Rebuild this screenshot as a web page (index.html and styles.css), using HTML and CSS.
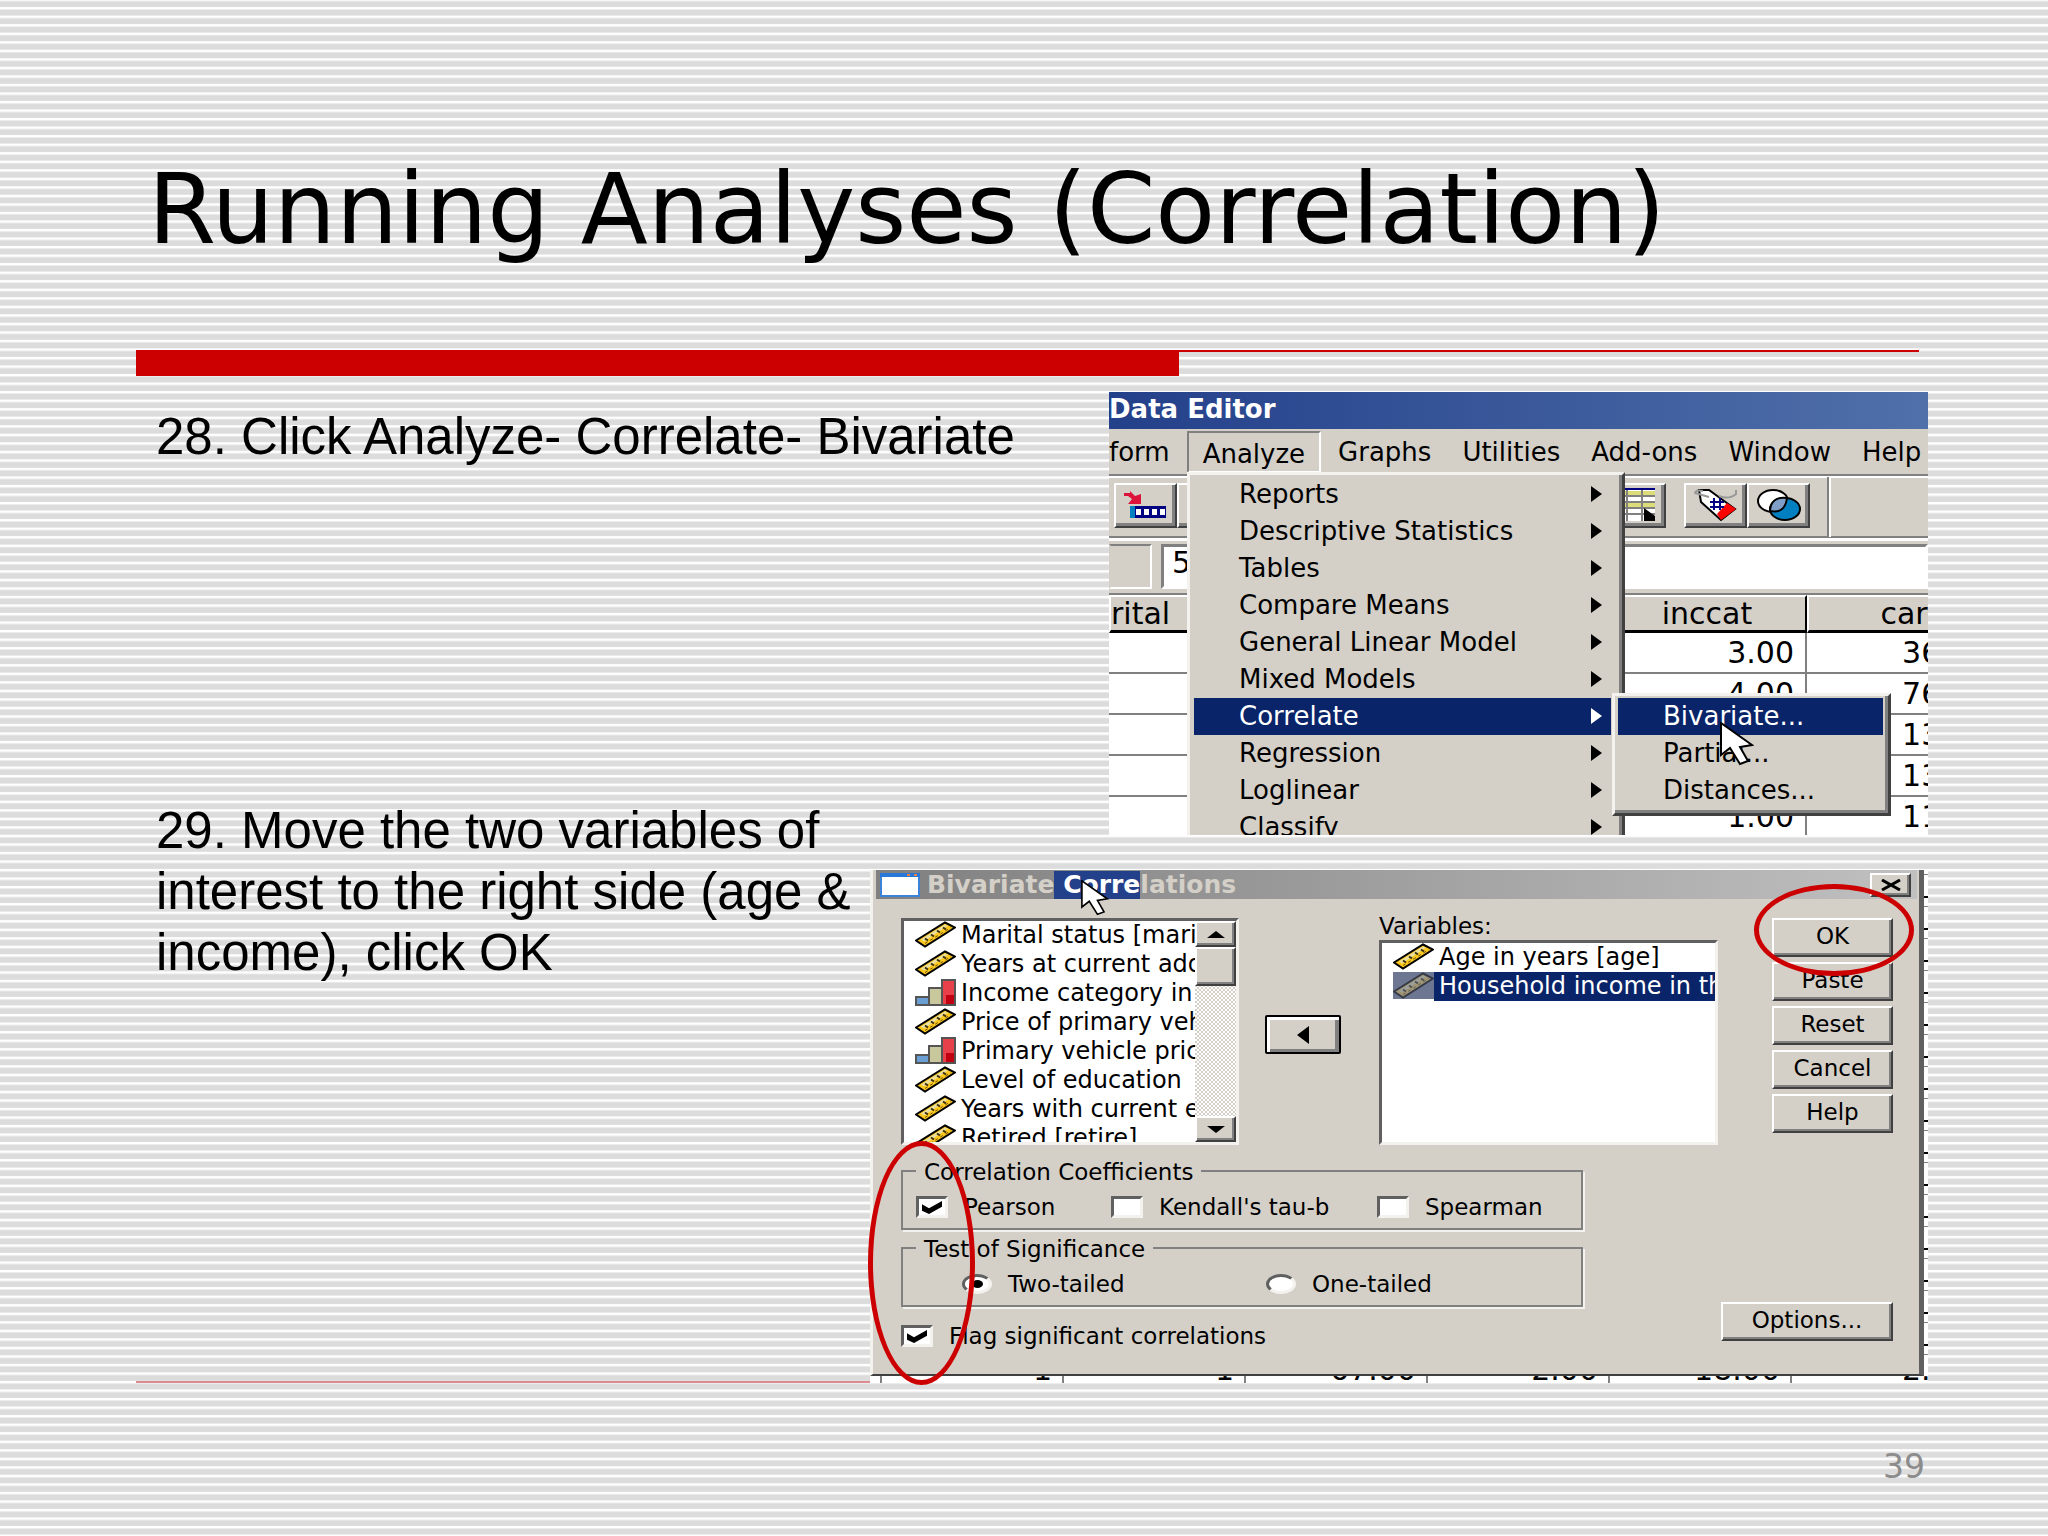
FILE: index.html
```html
<!DOCTYPE html>
<html lang="en">
<head>
    <meta charset="UTF-8">
    <meta name="viewport" content="width=device-width, initial-scale=1.0">
    <title>Running Analyses (Correlation)</title>
    <link rel="stylesheet" href="styles.css">
</head>
<body>
    <!-- shared icons -->
    <svg width="0" height="0" class="defs" aria-hidden="true">
        <symbol id="ruler" viewBox="0 0 41 26">
            <path d="M1 19 L30 1 L40 6 L10 25 Z" fill="#fcc81e" stroke="#000" stroke-width="2"/>
            <path d="M6 18 L30 3 L33 4 L9 20 Z" fill="#e8dfa0"/>
            <path d="M10 17 l3 2 M16 13 l3 2 M22 9 l3 2 M28 6 l3 2" stroke="#3a3010" stroke-width="2" fill="none"/>
            <path d="M10 22 L36 6" stroke="#6a5410" stroke-width="1" stroke-dasharray="3 3" fill="none"/>
        </symbol>
        <symbol id="bars" viewBox="0 0 41 27">
            <rect x="1" y="18" width="13" height="8" fill="#6a9fd4" stroke="#555" stroke-width="2"/>
            <rect x="14" y="9" width="13" height="17" fill="#c9c79c" stroke="#555" stroke-width="2"/>
            <rect x="27" y="1" width="13" height="25" fill="#e8404a" stroke="#555" stroke-width="2"/>
            <path d="M31 25 V16 H39 V25 Z" fill="#c00010"/>
        </symbol>
        <symbol id="cursor" viewBox="0 0 34 44">
            <path d="M1 1 V33 L10 26 L20 42 L28 39 L20 25 L32 23 Z" fill="#fff" stroke="#000" stroke-width="2"/>
        </symbol>
    </svg>

    <main class="slide">
        <h1>Running Analyses (Correlation)</h1>
        <div class="rule"></div>

        <div class="content">
            <p class="step step-one">28. Click Analyze- Correlate- Bivariate</p>

            <div class="editor">
                <div class="editor-title">Data Editor</div>
                <nav class="menubar">
                    <button>form</button>
                    <button class="open">Analyze</button>
                    <button>Graphs</button>
                    <button>Utilities</button>
                    <button>Add-ons</button>
                    <button>Window</button>
                    <button>Help</button>
                </nav>
                <div class="toolbar">
                    <button class="tool" aria-label="Insert variable">
                        <svg width="44" height="28" viewBox="0 0 44 28">
                            <path d="M0 2 H6 V0 L11 5 L17 3 V13 H4 L8 8 L4 5 H0 Z" fill="#dc143c"/>
                            <rect x="6" y="15" width="36" height="12" fill="#000080"/>
                            <path d="M12 18h5v6h-5z M20 18h5v6h-5z M28 18h5v6h-5z M36 18h5v6h-5z" fill="#fff"/>
                            <rect x="6" y="15" width="5" height="12" fill="#0080c0"/>
                        </svg>
                    </button>
                    <button class="tool" aria-label="Find"></button>
                    <button class="tool tool-far" aria-label="Select cases">
                        <svg width="44" height="34" viewBox="0 0 44 34">
                            <rect width="42" height="33" fill="#fff"/>
                            <path d="M0 3h42v5H0z M0 15h42v5H0z" fill="#dcdc78"/>
                            <path d="M0 8h42 M0 14h42 M0 20h42 M0 26h42 M14 2v31 M29 2v31" stroke="#808080" stroke-width="2"/>
                            <path d="M0 1h42" stroke="#000080" stroke-width="2"/>
                            <path d="M31 20 L42 28 V33 H31 Z" fill="#000"/>
                        </svg>
                    </button>
                    <button class="tool tool-gap" aria-label="Value labels">
                        <svg width="46" height="34" viewBox="0 0 46 34">
                            <path d="M6 2 L16 2 L42 21 L28 32 L8 14 Z" fill="#fff" stroke="#000" stroke-width="2"/>
                            <path d="M34 15 L43 21 L28 32 L24 26 Z" fill="#f00"/>
                            <path d="M2 6 Q2 1 10 3 M2 5 L16 9 M26 8 Q36 12 43 6 V2" fill="none" stroke="#999" stroke-width="2"/>
                            <path d="M21 10v12 M27 10v12 M17 14h14 M17 19h14" stroke="#000080" stroke-width="2"/>
                        </svg>
                    </button>
                    <button class="tool" aria-label="Use sets">
                        <svg width="46" height="34" viewBox="0 0 46 34">
                            <ellipse cx="17" cy="13" rx="15" ry="11" fill="#fff" stroke="#000" stroke-width="2"/>
                            <ellipse cx="29" cy="21" rx="15" ry="11" fill="#0080c0" stroke="#000" stroke-width="2"/>
                            <path d="M31 10 Q15 8 14 23 Q29 26 31 10 Z" fill="#809fc8" stroke="#000" stroke-width="2"/>
                        </svg>
                    </button>
                    <span class="separator"></span>
                </div>
                <div class="formula">
                    <span class="cell-name"></span>
                    <input class="cell-value" type="text" value="55" aria-label="Cell value">
                </div>
                <table class="data">
                    <thead>
                        <tr><th class="col-marital">rital</th><th class="col-inccat">inccat</th><th class="col-car">car</th></tr>
                    </thead>
                    <tbody>
                        <tr><td></td><td>3.00</td><td>36.00</td></tr>
                        <tr><td></td><td>4.00</td><td>76.00</td></tr>
                        <tr><td></td><td>2.00</td><td>13.00</td></tr>
                        <tr><td></td><td>2.00</td><td>13.00</td></tr>
                        <tr><td></td><td>1.00</td><td>11.00</td></tr>
                    </tbody>
                </table>

                <ul class="menu analyze-menu">
                    <li><button>Reports</button></li>
                    <li><button>Descriptive Statistics</button></li>
                    <li><button>Tables</button></li>
                    <li><button>Compare Means</button></li>
                    <li><button>General Linear Model</button></li>
                    <li><button>Mixed Models</button></li>
                    <li>
                        <button class="selected">Correlate</button>
                        <ul class="menu submenu">
                            <li><button class="selected">Bivariate...</button></li>
                            <li><button>Partial...</button></li>
                            <li><button>Distances...</button></li>
                        </ul>
                        <svg class="pointer menu-pointer"><use href="#cursor"/></svg>
                    </li>
                    <li><button>Regression</button></li>
                    <li><button>Loglinear</button></li>
                    <li><button>Classify</button></li>
                </ul>
            </div>

            <p class="step step-two">29. Move the two variables of interest to the right side (age &amp; income), click OK</p>

            <div class="capture">
                <div class="backdrop">
                    <form class="dialog">
                        <div class="dialog-title">
                            <svg width="40" height="24" viewBox="0 0 40 24">
                                <rect x="1" y="1" width="38" height="22" fill="#fff" stroke="#3c82d8" stroke-width="2"/>
                                <rect width="40" height="4" fill="#2878d8"/>
                                <path d="M27 2h3 M34 2h3" stroke="#f08040" stroke-width="2"/>
                            </svg>
                            <span>Bivariate<mark> Corre</mark>lations</span>
                            <button type="button" class="close" aria-label="Close">
                                <svg width="22" height="12" viewBox="0 0 22 12"><path d="M2 1 L20 11 M20 1 L2 11" stroke="#000" stroke-width="3"/></svg>
                            </button>
                        </div>
                        <div class="dialog-body">
                            <div class="list source-list">
                                <ul>
                                    <li><svg><use href="#ruler"/></svg><span>Marital status [marital]</span></li>
                                    <li><svg><use href="#ruler"/></svg><span>Years at current address</span></li>
                                    <li><svg><use href="#bars"/></svg><span>Income category in</span></li>
                                    <li><svg><use href="#ruler"/></svg><span>Price of primary vehicle</span></li>
                                    <li><svg><use href="#bars"/></svg><span>Primary vehicle price</span></li>
                                    <li><svg><use href="#ruler"/></svg><span>Level of education</span></li>
                                    <li><svg><use href="#ruler"/></svg><span>Years with current employer</span></li>
                                    <li><svg><use href="#ruler"/></svg><span>Retired [retire]</span></li>
                                </ul>
                                <div class="scrollbar">
                                    <button type="button" aria-label="Scroll up"><i class="up"></i></button>
                                    <span class="thumb"></span>
                                    <button type="button" class="last" aria-label="Scroll down"><i class="down"></i></button>
                                </div>
                            </div>
                            <button type="button" class="move" aria-label="Move variable"><i class="left"></i></button>
                            <div class="variables">
                                <h2>Variables:</h2>
                                <div class="list">
                                    <ul>
                                        <li><svg><use href="#ruler"/></svg><span>Age in years [age]</span></li>
                                        <li class="picked"><svg><use href="#ruler"/></svg><span>Household income in thousands</span></li>
                                    </ul>
                                </div>
                            </div>
                            <div class="actions">
                                <button type="button">OK</button>
                                <button type="button">Paste</button>
                                <button type="button">Reset</button>
                                <button type="button">Cancel</button>
                                <button type="button">Help</button>
                            </div>
                        </div>
                        <div class="dialog-options">
                            <div class="groups">
                                <fieldset>
                                    <legend>Correlation Coefficients</legend>
                                    <label class="pearson"><input type="checkbox" checked>Pearson</label>
                                    <label class="kendall"><input type="checkbox">Kendall's tau-b</label>
                                    <label><input type="checkbox">Spearman</label>
                                </fieldset>
                                <fieldset>
                                    <legend>Test of Significance</legend>
                                    <label class="two-tailed"><input type="radio" name="tail" checked>Two-tailed</label>
                                    <label><input type="radio" name="tail">One-tailed</label>
                                </fieldset>
                                <label class="flag"><input type="checkbox" checked>Flag significant correlations</label>
                            </div>
                            <button type="button" class="options">Options...</button>
                        </div>
                    </form>
                    <div class="strip"><span></span><span>1</span><span>1</span><span>67.00</span><span>2.00</span><span>18.00</span><span class="cut">2.00</span></div>
                </div>
                <svg class="pointer title-pointer"><use href="#cursor"/></svg>
                <div class="ring ring-tests"></div>
                <div class="ring ring-ok"></div>
            </div>
        </div>

        <footer>39</footer>
    </main>
</body>
</html>
```
FILE: styles.css
```css
* {
    box-sizing: border-box;
}

body {
    margin: 0;
    min-height: 100vh;
    font-family: "DejaVu Sans", Verdana, sans-serif;
    color: #000;
    /* 15 ruled lines in every 128px */
    background-color: #dcdcdc;
    background-image: repeating-linear-gradient(#fff 0, #dcdcdc 2px, #dcdcdc calc(100% / 15 - 2px), #fff calc(100% / 15 - 1px), #fff calc(100% / 15));
    background-size: 100% 128px;
}

button, input {
    font: inherit;
    color: inherit;
    margin: 0;
}

ul {
    list-style: none;
    margin: 0;
    padding: 0;
}

.defs {
    position: absolute;
}

.slide {
    padding: 151px 120px 0 136px;
}

h1 {
    margin: 0 0 83px 12px;
    font-size: 98px;
    font-weight: normal;
    line-height: 116px;
    white-space: nowrap;
}

.rule {
    height: 26px;
    margin: 0 9px 16px 0;
    border-top: 2px solid #cc0000;
    background: linear-gradient(#cc0000, #cc0000) no-repeat 0 0 / 1043px 100%;
    background-size: calc(100% * 7 / 12 + 3px) 100%;
}

.content {
    display: grid;
    grid-template-columns: 734fr 239fr 819fr;
    grid-template-rows: 1fr 35px 35px auto;
}

.step {
    margin: 0;
    padding-left: 20px;
    font-family: "Liberation Sans", Arial, sans-serif;
    font-size: 51px;
    line-height: 61px;
}

.step-one {
    grid-area: 1 / 1 / 2 / 3;
    padding-top: 14px;
}

.step-two {
    grid-area: 2 / 1 / 5 / 2;
    border-bottom: 2px solid #dc8c90;
}

/* data editor */
.editor {
    grid-area: 1 / 3 / 3 / 4;
    position: relative;
    overflow: hidden;
    aspect-ratio: 819 / 443;
    background: #d4d0c8;
    font-size: 26px;
}

.editor-title {
    height: 37px;
    line-height: 34px;
    font-weight: bold;
    color: #fff;
    white-space: nowrap;
    background: linear-gradient(to right, #23408a, #5070aa);
}

.menubar {
    display: flex;
    align-items: center;
    gap: 31px;
    height: 47px;
    border-bottom: 2px solid #808080;
    white-space: nowrap;
}

.menubar button {
    flex: none;
    padding: 0;
    border: none;
    background: none;
    line-height: 34px;
}

.menubar .open {
    margin: 0 -14px;
    padding: 4px 14px 0;
    border: 2px solid;
    border-color: #808080 #fff #fff #808080;
}

.toolbar {
    display: flex;
    align-items: center;
    height: 62px;
    padding: 0 0 4px 5px;
    border-top: 2px solid #fff;
    border-bottom: 2px solid #808080;
}

.tool {
    display: flex;
    align-items: center;
    justify-content: center;
    flex: none;
    width: 63px;
    height: 45px;
    padding: 0;
    border: 2px solid;
    border-color: #fff #404040 #404040 #fff;
    background: #d4d0c8;
    box-shadow: inset -3px -3px #808080;
}

.tool-far {
    margin-left: 363px;
}

.tool-gap {
    margin-left: 18px;
}

.separator {
    width: 4px;
    height: 60px;
    margin: 0 0 -4px 17px;
    border-left: 2px solid #808080;
    border-right: 2px solid #fff;
}

.formula {
    display: flex;
    gap: 9px;
    height: 57px;
    padding: 3px 0 4px;
    border-top: 3px solid #fff;
    border-bottom: 2px solid #808080;
}

.cell-name {
    width: 43px;
    border: 2px solid;
    border-color: #808080 #fff #fff transparent;
}

.cell-value {
    flex: 1;
    min-width: 0;
    padding: 0 8px 8px;
    border: 3px solid;
    border-color: #808080 #fff #fff #808080;
    background: #fff;
    font-size: 30px;
}

.data {
    table-layout: fixed;
    width: 892px;
    border-collapse: separate;
    border-spacing: 0;
    background: #fff;
    font-size: 30px;
}

.data th {
    height: 38px;
    padding: 0;
    line-height: 32px;
    font-weight: normal;
    background: #d4d0c8;
    border-top: 2px solid #fff;
    border-left: 2px solid #fff;
    border-right: 2px solid #000;
    border-bottom: 3px solid #000;
}

.data .col-marital {
    width: 498px;
    text-align: left;
}

.data .col-inccat {
    width: 200px;
}

.data td {
    height: 41px;
    padding: 0 11px 0 0;
    line-height: 36px;
    text-align: right;
    border-right: 2px solid #808080;
    border-bottom: 2px solid #808080;
}

.menu {
    position: absolute;
    padding: 2px 11px 2px 3px;
    border: 3px solid;
    border-color: #f4f2ee #404040 #404040 #f4f2ee;
    background: #d4d0c8;
    box-shadow: inset -3px -3px #808080;
}

.menu li {
    position: relative;
}

.menu button {
    display: block;
    width: 100%;
    height: 37px;
    padding: 0 0 0 45px;
    border: none;
    background: none;
    text-align: left;
    line-height: 35px;
    white-space: nowrap;
}

.menu .selected {
    color: #fff;
    background: #0a246a;
}

.analyze-menu {
    top: 80px;
    left: 78px;
    width: 438px;
    padding-left: 4px;
    padding-top: 1px;
}

.analyze-menu > li::after {
    content: "";
    position: absolute;
    top: 10px;
    right: 9px;
    border-left: 11px solid #000;
    border-top: 8px solid transparent;
    border-bottom: 8px solid transparent;
}

.analyze-menu > li:nth-child(7)::after {
    border-left-color: #fff;
}

.submenu {
    z-index: 1;
    top: -5px;
    left: 418px;
    width: 279px;
    padding-right: 5px;
    padding-bottom: 4px;
}

.pointer {
    position: absolute;
    z-index: 2;
    width: 34px;
    height: 44px;
}

.menu-pointer {
    top: 24px;
    left: 526px;
}

/* bivariate correlations dialog */
.capture {
    grid-area: 4 / 2 / 5 / 4;
    position: relative;
    font-size: 23px;
}

.backdrop {
    overflow: hidden;
    padding: 0 4px 0 0;
    background: repeating-linear-gradient(#fff 0, #fff 4px, #808080 4px, #808080 5px, #fff 5px, #fff 26px, #000 26px, #000 28px, #fff 28px, #fff 32px);
}

.dialog {
    height: 506px;
    padding: 0 2px 0 3px;
    border-left: 3px solid #f4f2ee;
    border-right: 5px solid #606060;
    border-bottom: 2px solid #404040;
    background: #d4d0c8;
}

.dialog-title {
    display: flex;
    align-items: center;
    gap: 7px;
    height: 29px;
    padding: 0 6px 0 4px;
    font-size: 25px;
    font-weight: bold;
    line-height: 28px;
    color: #d4d0c8;
    white-space: pre;
    background: linear-gradient(to right, #808080, #c0c0c0);
}

.dialog-title mark {
    display: inline-block;
    color: #fff;
    background: #23408a;
}

.dialog button {
    padding: 0;
    border: 2px solid;
    border-color: #fff #404040 #404040 #fff;
    background: #d4d0c8;
    box-shadow: inset -2px -2px #808080;
}

.dialog .close {
    display: flex;
    align-items: center;
    justify-content: center;
    width: 41px;
    height: 24px;
    margin-left: auto;
}

.dialog-body {
    display: grid;
    grid-template-columns: 338fr 140px 339fr 175px;
    height: 227px;
    margin: 19px 24px 0 25px;
}

.list {
    display: flex;
    min-width: 0;
    overflow: hidden;
    border: 3px solid;
    border-color: #606060 #f4f2ee #f4f2ee #606060;
    background: #fff;
    font-size: 24px;
}

.list ul {
    flex: 1;
    min-width: 0;
    height: 0;
    padding-left: 11px;
}

.list li {
    display: flex;
    height: 29px;
    overflow: hidden;
    line-height: 29px;
    white-space: nowrap;
}

.list li svg {
    flex: none;
    width: 41px;
    height: 27px;
}

.list li span {
    flex: 1;
    padding-left: 5px;
}

.picked svg {
    background: linear-gradient(#7484b4, #7484b4);
    filter: brightness(0.9) saturate(0.6);
}

.picked use {
    opacity: 0.5;
}

.picked span {
    color: #fff;
    background: #0a246a;
}

.scrollbar {
    display: flex;
    flex-direction: column;
    width: 41px;
    background: repeating-conic-gradient(#fff 0 25%, #d4d0c8 0 50%) 0 0 / 4px 4px;
}

.scrollbar button {
    display: flex;
    align-items: center;
    justify-content: center;
    height: 26px;
}

.thumb {
    height: 39px;
    border: 2px solid;
    border-color: #fff #404040 #404040 #fff;
    background: #d4d0c8;
    box-shadow: inset -2px -2px #808080;
}

.scrollbar .last {
    margin-top: auto;
}

.up, .down {
    border-left: 9px solid transparent;
    border-right: 9px solid transparent;
}

.up {
    border-bottom: 7px solid #000;
}

.down {
    border-top: 7px solid #000;
}

.left {
    border-right: 12px solid #000;
    border-top: 9px solid transparent;
    border-bottom: 9px solid transparent;
}

.dialog .move {
    display: flex;
    align-items: center;
    justify-content: center;
    width: 76px;
    height: 39px;
    margin: 97px 0 0 26px;
    border-color: #000;
    border-radius: 2px;
    box-shadow: inset 3px 3px #fff, inset -4px -3px #808080;
}

.variables {
    display: flex;
    flex-direction: column;
    min-width: 0;
}

.variables h2 {
    margin: -6px 0 0;
    font-size: 23px;
    font-weight: normal;
    line-height: 28px;
}

.variables .list {
    flex: 1;
}

.actions {
    display: flex;
    flex-direction: column;
    gap: 5px;
    margin-left: 54px;
}

.actions button {
    height: 39px;
    padding-bottom: 3px;
}

.dialog-options {
    display: flex;
    align-items: flex-end;
    justify-content: space-between;
    margin: 11px 24px 0 25px;
}

.groups {
    flex: 0 0 682px;
}

fieldset {
    display: flex;
    align-items: center;
    height: 74px;
    margin: 0 0 3px;
    padding: 0 13px;
    border: 2px solid #808080;
    box-shadow: 2px 2px #f4f2ee;
}

legend {
    padding: 2px 8px 0;
    line-height: 28px;
}

label {
    display: flex;
    align-items: center;
    gap: 16px;
    line-height: 28px;
    white-space: nowrap;
}

.pearson {
    width: 195px;
}

.kendall {
    width: 266px;
}

.two-tailed {
    width: 304px;
    margin-left: 46px;
}

.flag {
    margin-top: 15px;
}

.dialog input {
    appearance: none;
    position: relative;
    flex: none;
    width: 32px;
    height: 22px;
    border: 3px solid;
    border-color: #606060 #f4f2ee #f4f2ee #606060;
    background: #fff;
}

.dialog input[type="radio"] {
    width: 30px;
    height: 20px;
    border-radius: 50%;
}

.dialog input[type="checkbox"]:checked::after {
    content: "";
    position: absolute;
    top: 2px;
    left: 3px;
    width: 20px;
    height: 13px;
    background: #000;
    clip-path: polygon(0 25%, 35% 55%, 100% 0, 100% 45%, 35% 100%, 0 75%);
}

.dialog input[type="radio"]:checked::after {
    content: "";
    position: absolute;
    top: 3px;
    left: 7px;
    width: 11px;
    height: 8px;
    border-radius: 50%;
    background: #000;
}

.dialog .options {
    width: 172px;
    height: 39px;
    margin-bottom: 9px;
    padding-bottom: 3px;
}

.strip {
    display: grid;
    grid-template-columns: 12px repeat(5, 182px) 1fr;
    height: 7px;
    margin-right: -4px;
    overflow: hidden;
    background: #fff;
    font-size: 30px;
    line-height: 30px;
}

.strip span {
    display: flex;
    align-items: flex-end;
    justify-content: flex-end;
    height: 9px;
    padding-right: 10px;
    border-right: 2px solid #808080;
}

.strip .cut {
    justify-content: flex-start;
    padding: 0 0 0 110px;
    border: none;
}

.title-pointer {
    top: 10px;
    left: 210px;
    width: 30px;
    height: 36px;
}

.ring {
    position: absolute;
    z-index: 3;
    border: 5px solid #cc0000;
    border-radius: 50%;
}

.ring-tests {
    top: 271px;
    left: -2px;
    width: 107px;
    height: 244px;
}

.ring-ok {
    top: 14px;
    right: 14px;
    width: 160px;
    height: 92px;
}

footer {
    margin-top: 64px;
    font-size: 33px;
    line-height: 40px;
    text-align: right;
    color: #8c8c8c;
    padding-right: 3px;
}
```
